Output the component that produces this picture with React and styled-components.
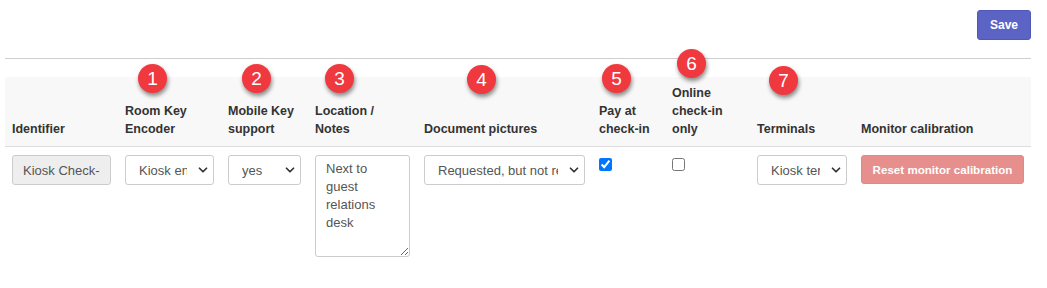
import React from 'react'
import styled, { createGlobalStyle } from 'styled-components'
import { ChevronDown } from 'lucide-react'

const columns = [
  { key: 'identifier', label: 'Identifier', width: 113 },
  { key: 'encoder', label: ['Room Key', 'Encoder'], width: 103, badge: { n: 1, x: 20, y: -13 } },
  { key: 'mobile', label: ['Mobile Key', 'support'], width: 87, badge: { n: 2, x: 21, y: -13 } },
  { key: 'location', label: ['Location /', 'Notes'], width: 109, badge: { n: 3, x: 17, y: -13 } },
  { key: 'documents', label: 'Document pictures', width: 175, badge: { n: 4, x: 50, y: -12 } },
  { key: 'pay', label: ['Pay at', 'check-in'], width: 73, badge: { n: 5, x: 10, y: -13 } },
  { key: 'online', label: ['Online', 'check-in', 'only'], width: 85, badge: { n: 6, x: 12, y: -28 } },
  { key: 'terminals', label: 'Terminals', width: 104, badge: { n: 7, x: 19, y: -11 } },
  { key: 'monitor', label: 'Monitor calibration', width: 177 },
]

const Select = ({ value, options }) => (
  <SelectWrap>
    <NativeSelect defaultValue={value}>
      {options.map((o) => (
        <option key={o}>{o}</option>
      ))}
    </NativeSelect>
    <Chevron>
      <ChevronDown size={14} strokeWidth={3} />
    </Chevron>
  </SelectWrap>
)

const App = () => {
  return (
    <>
      <GlobalStyle />
      <Page>
        <Toolbar>
          <SaveButton>Save</SaveButton>
        </Toolbar>
        <Rule />
        <Table>
          <colgroup>
            {columns.map((c) => (
              <col key={c.key} style={{ width: c.width }} />
            ))}
          </colgroup>
          <thead>
            <tr>
              {columns.map((c) => (
                <Th key={c.key}>
                  {Array.isArray(c.label)
                    ? c.label.map((l, i) => (
                        <React.Fragment key={l}>
                          {i > 0 && <br />}
                          {l}
                        </React.Fragment>
                      ))
                    : c.label}
                  {c.badge && (
                    <Badge $x={c.badge.x} $y={c.badge.y}>
                      {c.badge.n}
                    </Badge>
                  )}
                </Th>
              ))}
            </tr>
          </thead>
          <tbody>
            <tr>
              <Td>
                <TextInput readOnly value="Kiosk Check-in terminal" />
              </Td>
              <Td>
                <Select value="Kiosk encoder" options={['Kiosk encoder', 'None']} />
              </Td>
              <Td>
                <Select value="yes" options={['yes', 'no']} />
              </Td>
              <Td>
                <Notes defaultValue={'Next to guest relations desk'} />
              </Td>
              <Td>
                <Select
                  value="Requested, but not required"
                  options={['Requested, but not required', 'Required', 'Not requested']}
                />
              </Td>
              <Td>
                <Check type="checkbox" defaultChecked />
              </Td>
              <Td>
                <Check type="checkbox" />
              </Td>
              <Td>
                <Select value="Kiosk terminal" options={['Kiosk terminal', 'All terminals']} />
              </Td>
              <Td>
                <ResetButton disabled>Reset monitor calibration</ResetButton>
              </Td>
            </tr>
          </tbody>
        </Table>
      </Page>
    </>
  )
}

export default App

const GlobalStyle = createGlobalStyle`
  body {
    margin: 0;
    background: #fff;
    font-family: "Liberation Sans", Arial, sans-serif;
    font-size: 13px;
    color: #333;
  }
  * {
    box-sizing: border-box;
  }
`

const Page = styled.div`
  width: 1026px;
  margin-left: 5px;
`

const Toolbar = styled.div`
  display: flex;
  justify-content: flex-end;
  padding-top: 10px;
`

const SaveButton = styled.button`
  height: 30px;
  padding: 0 12px;
  border: 1px solid #4f57b8;
  border-radius: 3px;
  background: #5b63c5;
  color: #fff;
  font-family: "Liberation Sans", Arial, sans-serif;
  font-size: 12px;
  font-weight: bold;
`

const Rule = styled.hr`
  margin: 18px 0 18px;
  border: 0;
  border-top: 1px solid #cfcfcf;
`

const Table = styled.table`
  width: 1026px;
  table-layout: fixed;
  border-collapse: collapse;
`

const Th = styled.th`
  position: relative;
  padding: 7px 7px 8px;
  background: #f8f8f8;
  border-bottom: 1px solid #dedede;
  vertical-align: bottom;
  text-align: left;
  font-size: 12.5px;
  font-weight: bold;
  line-height: 18px;
  color: #333;
`

const Badge = styled.span`
  position: absolute;
  left: ${(p) => p.$x}px;
  top: ${(p) => p.$y}px;
  width: 29px;
  height: 29px;
  border-radius: 50%;
  background: #f0383f;
  box-shadow: 1px 3px 4px rgba(0, 0, 0, 0.45);
  color: #fff;
  font-size: 19px;
  font-weight: normal;
  line-height: 29px;
  text-align: center;
`

const Td = styled.td`
  padding: 8px 7px;
  vertical-align: top;
`

const TextInput = styled.input`
  display: block;
  width: 100%;
  height: 30px;
  padding: 0 10px;
  border: 1px solid #ccc;
  border-radius: 3px;
  background: #eee;
  color: #555;
  font-family: "Liberation Sans", Arial, sans-serif;
  font-size: 13px;
  outline: none;
`

const SelectWrap = styled.div`
  position: relative;
  width: 100%;
`

const NativeSelect = styled.select`
  display: block;
  width: 100%;
  height: 30px;
  padding: 0 26px 0 13px;
  border: 1px solid #ccc;
  border-radius: 3px;
  background: #fff;
  color: #555;
  font-family: "Liberation Sans", Arial, sans-serif;
  font-size: 13px;
  appearance: none;
  outline: none;
`

const Chevron = styled.span`
  position: absolute;
  right: 4px;
  top: 8px;
  display: flex;
  color: #333;
  pointer-events: none;
`

const Notes = styled.textarea`
  display: block;
  width: 100%;
  height: 102px;
  padding: 4px 10px;
  border: 1px solid #ccc;
  border-radius: 3px;
  color: #555;
  font-family: "Liberation Sans", Arial, sans-serif;
  font-size: 13px;
  line-height: 18px;
  resize: vertical;
  outline: none;
`

const Check = styled.input`
  display: block;
  width: 13px;
  height: 13px;
  margin: 3px 0 0;
`

const ResetButton = styled.button`
  display: block;
  width: 100%;
  height: 29px;
  padding: 0;
  border: 1px solid #e48885;
  border-radius: 3px;
  background: #e68f8d;
  color: #fff;
  font-family: "Liberation Sans", Arial, sans-serif;
  font-size: 11.6px;
  font-weight: bold;
`
